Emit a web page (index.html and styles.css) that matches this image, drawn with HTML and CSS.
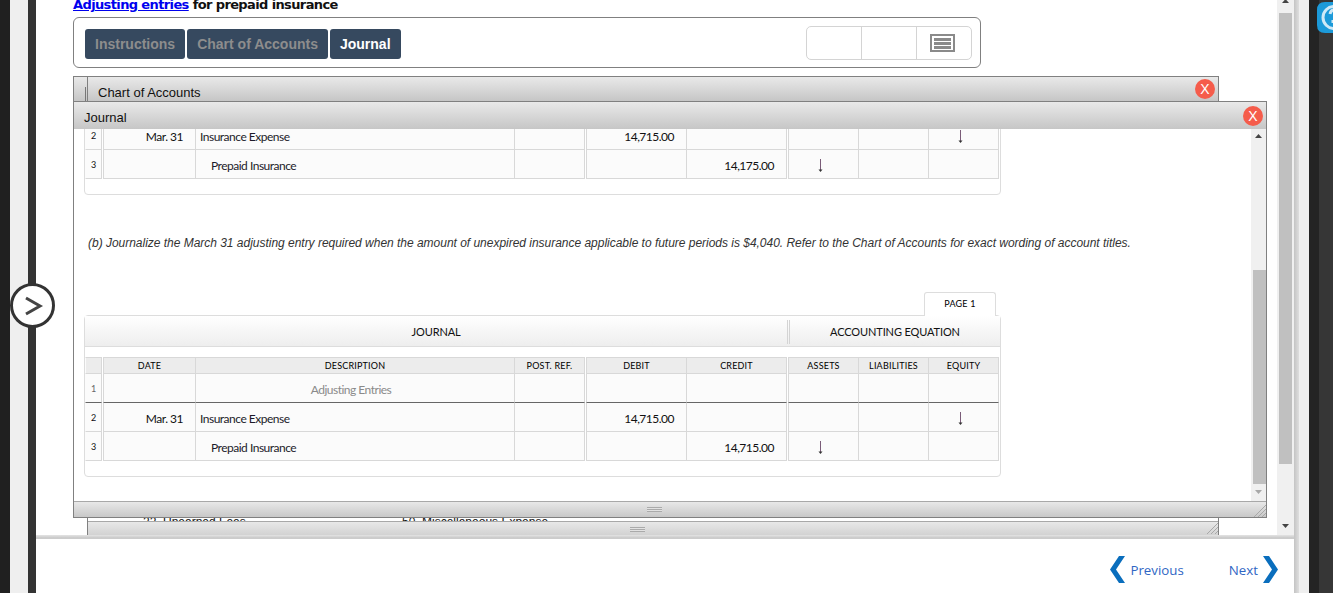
FILE: index.html
```html
<!DOCTYPE html>
<html lang="en">
<head>
<meta charset="utf-8">
<title>Adjusting entries for prepaid insurance</title>
<link rel="stylesheet" href="styles.css">
</head>
<body>
<div class="rail rail-a"></div>
<div class="rail rail-b"></div>
<div class="rail rail-c"></div>
<main class="main">
  <div class="viewport">
    <div class="stage">
      <h1 class="heading"><a href="#">Adjusting entries</a> for prepaid insurance</h1>
      <div class="toolbar">
        <button class="tab-btn">Instructions</button>
        <button class="tab-btn">Chart of Accounts</button>
        <button class="tab-btn active">Journal</button>
        <div class="tools">
          <span class="tool"></span>
          <span class="tool"></span>
          <span class="tool"><span class="list-icon"><i></i><i></i><i></i></span></span>
        </div>
      </div>

      <section class="win win-back">
        <div class="titlebar"><span class="mark"></span></div>
      </section>

      <section class="win win-chart">
        <div class="titlebar"><span class="title">Chart of Accounts</span><span class="close">X</span></div>
        <div class="chart-body">
          <span class="acct acct-a">22. Unearned Fees</span>
          <span class="acct acct-b">50. Miscellaneous Expense</span>
        </div>
        <div class="statusbar chart-status">
          <span class="grip"></span>
          <svg class="corner" width="11" height="11" viewBox="0 0 11 11"><path d="M0 11L11 0M4 11L11 4M8 11L11 8" stroke="#a8a8a8" fill="none"/></svg>
        </div>
      </section>

      <section class="win win-journal">
        <div class="titlebar"><span class="title">Journal</span><span class="close">X</span></div>
        <div class="journal-body">
          <div class="scroll-content">
            <div class="card">
              <div class="card-head"><div class="head-main">JOURNAL</div><div class="head-eq">ACCOUNTING EQUATION</div></div>
              <table class="ledger">
                <colgroup><col class="c-num"><col class="c-gap"><col class="c-date"><col class="c-desc"><col class="c-post"><col class="c-gap"><col class="c-debit"><col class="c-credit"><col class="c-gap"><col class="c-assets"><col class="c-liab"><col class="c-equity"></colgroup>
                <tr class="hdr"><th class="num"></th><td class="gap"></td><th class="start">DATE</th><th>DESCRIPTION</th><th>POST. REF.</th><td class="gap"></td><th class="start">DEBIT</th><th>CREDIT</th><td class="gap"></td><th class="start">ASSETS</th><th>LIABILITIES</th><th>EQUITY</th></tr>
                <tr class="row-first"><td class="num dim">1</td><td class="gap"></td><td class="start"></td><td class="note">Adjusting Entries</td><td></td><td class="gap"></td><td class="start"></td><td></td><td class="gap"></td><td class="start"></td><td></td><td></td></tr>
                <tr><td class="num">2</td><td class="gap"></td><td class="start date">Mar. 31</td><td class="acct-cell">Insurance Expense</td><td></td><td class="gap"></td><td class="start amount">14,715.00</td><td></td><td class="gap"></td><td class="start"></td><td></td><td class="arrow"><svg width="7" height="13" viewBox="0 0 7 13"><path d="M3.5 0V12" stroke="#7a5c78"/><path d="M1.5 10.5L3.5 13L5.500 10.5Z" fill="#333"/></svg></td></tr>
                <tr><td class="num">3</td><td class="gap"></td><td class="start"></td><td class="acct-cell indent">Prepaid Insurance</td><td></td><td class="gap"></td><td class="start"></td><td class="amount">14,175.00</td><td class="gap"></td><td class="start arrow"><svg width="7" height="13" viewBox="0 0 7 13"><path d="M3.5 0V12" stroke="#7a5c78"/><path d="M1.5 10.5L3.5 13L5.500 10.5Z" fill="#333"/></svg></td><td></td><td></td></tr>
              </table>
            </div>
            <p class="prompt">(b) Journalize the March 31 adjusting entry required when the amount of unexpired insurance applicable to future periods is $4,040. Refer to the Chart of Accounts for exact wording of account titles.</p>
            <div class="page-tab">PAGE 1</div>
            <div class="card">
              <div class="card-head"><div class="head-main">JOURNAL</div><div class="head-eq">ACCOUNTING EQUATION</div></div>
              <table class="ledger">
                <colgroup><col class="c-num"><col class="c-gap"><col class="c-date"><col class="c-desc"><col class="c-post"><col class="c-gap"><col class="c-debit"><col class="c-credit"><col class="c-gap"><col class="c-assets"><col class="c-liab"><col class="c-equity"></colgroup>
                <tr class="hdr"><th class="num"></th><td class="gap"></td><th class="start">DATE</th><th>DESCRIPTION</th><th>POST. REF.</th><td class="gap"></td><th class="start">DEBIT</th><th>CREDIT</th><td class="gap"></td><th class="start">ASSETS</th><th>LIABILITIES</th><th>EQUITY</th></tr>
                <tr class="row-first"><td class="num dim">1</td><td class="gap"></td><td class="start"></td><td class="note">Adjusting Entries</td><td></td><td class="gap"></td><td class="start"></td><td></td><td class="gap"></td><td class="start"></td><td></td><td></td></tr>
                <tr><td class="num">2</td><td class="gap"></td><td class="start date">Mar. 31</td><td class="acct-cell">Insurance Expense</td><td></td><td class="gap"></td><td class="start amount">14,715.00</td><td></td><td class="gap"></td><td class="start"></td><td></td><td class="arrow"><svg width="7" height="13" viewBox="0 0 7 13"><path d="M3.5 0V12" stroke="#7a5c78"/><path d="M1.5 10.5L3.5 13L5.500 10.5Z" fill="#333"/></svg></td></tr>
                <tr><td class="num">3</td><td class="gap"></td><td class="start"></td><td class="acct-cell indent">Prepaid Insurance</td><td></td><td class="gap"></td><td class="start"></td><td class="amount">14,715.00</td><td class="gap"></td><td class="start arrow"><svg width="7" height="13" viewBox="0 0 7 13"><path d="M3.5 0V12" stroke="#7a5c78"/><path d="M1.5 10.5L3.5 13L5.500 10.5Z" fill="#333"/></svg></td><td></td><td></td></tr>
              </table>
            </div>
          </div>
          <div class="inner-bar">
            <svg class="sb-up" width="7" height="4" viewBox="0 0 7 4"><path d="M0 4L3.500 0L7 4Z" fill="#444"/></svg>
            <div class="inner-thumb"></div>
            <svg class="sb-down" width="7" height="4" viewBox="0 0 7 4"><path d="M0 0L3.500 4L7 0Z" fill="#a8a8a8"/></svg>
          </div>
        </div>
        <div class="statusbar journal-status">
          <span class="grip"></span>
          <svg class="corner" width="12" height="12" viewBox="0 0 12 12"><path d="M0 12L12 0M4 12L12 4M8 12L12 8" stroke="#a8a8a8" fill="none"/></svg>
        </div>
      </section>
    </div>
    <div class="outer-bar">
      <svg class="outer-up" width="7" height="4" viewBox="0 0 7 4"><path d="M0 4L3.500 0L7 4Z" fill="#444"/></svg>
      <div class="outer-thumb"></div>
      <svg class="outer-down" width="7" height="4" viewBox="0 0 7 4"><path d="M0 0L3.500 4L7 0Z" fill="#444"/></svg>
    </div>
  </div>
  <footer class="footer">
    <a class="nav prev" href="#"><svg width="15" height="27" viewBox="0 0 15 27"><path d="M9 0H15L6 13.500L15 27H9L0 13.500Z" fill="#0a6ebd"/></svg><span>Previous</span></a>
    <a class="nav next" href="#"><span>Next</span><svg width="15" height="27" viewBox="0 0 15 27"><path d="M0 0H6L15 13.500L6 27H0L9 13.500Z" fill="#0a6ebd"/></svg></a>
  </footer>
</main>
<div class="rail rail-shadow"></div>
<div class="rail rail-d"></div>
<div class="rail rail-e"></div>
<div class="rail rail-f"></div>
<button class="side-toggle" aria-label="Expand"><svg width="24" height="22" viewBox="0 0 24 22"><path d="M5 3L19 11L5 19" fill="none" stroke="#444" stroke-width="3"/></svg></button>
<div class="help"><svg width="16" height="31" viewBox="0 0 16 31"><path d="M16 0H8Q0 0 0 8V23Q0 31 8 31H16Z" fill="#1c9ad9"/><circle cx="17" cy="15.500" r="11" fill="none" stroke="#cfe9f6" stroke-width="3"/><path d="M13 12Q14 8 17 8" fill="none" stroke="#cfe9f6" stroke-width="3"/><path d="M16 18V21" stroke="#cfe9f6" stroke-width="3"/></svg></div>
</body>
</html>
```

FILE: styles.css
```css
* { box-sizing: border-box; }
html, body { margin: 0; height: 593px; overflow: hidden; }
body { display: flex; background: #333; font-family: "Liberation Sans", Arial, sans-serif; color: #111; }

.rail { flex: none; height: 593px; }
.rail-a { width: 10px; background: #202020; }
.rail-b { width: 18px; background: #efefef; }
.rail-c { width: 8px; background: #333; }
.rail-shadow { width: 5px; background: linear-gradient(90deg, #c4c4c4, #dedede); }
.rail-d { width: 10px; background: #efefef; }
.rail-e { width: 10px; background: #242424; }
.rail-f { flex: 1; background: #363636; }

.main { flex: none; width: 1258px; height: 593px; display: flex; flex-direction: column; background: #fff; }
.viewport { flex: none; height: 535px; display: flex; }
.stage { flex: 1; position: relative; overflow: hidden; background: #fff; }

.heading { margin: -3px 0 0 37px; height: 20px; font: bold 13px/16px "DejaVu Sans", Verdana, sans-serif; color: #111; white-space: nowrap; letter-spacing: -.62px; }
.heading a { color: #0000ee; }

.toolbar { margin-left: 37px; width: 908px; height: 51px; display: flex; align-items: flex-start; gap: 2px; padding: 11px 8px 0 11px; border: 1px solid #808080; border-radius: 6px; background: #fff; }
.tab-btn { height: 30px; padding: 0 10px; border: 0; border-radius: 3px; background: #36495f; color: #8d8d8d; font: bold 14px "Liberation Sans", Arial, sans-serif; }
.tab-btn.active { color: #fff; }
.tools { margin: -3px 0 0 auto; width: 166px; height: 34px; display: flex; border: 1px solid #d4d4d4; border-radius: 5px; }
.tool { flex: 1; display: flex; align-items: center; justify-content: center; border-right: 1px solid #d4d4d4; }
.tool:last-child { border-right: 0; }
.list-icon { width: 25px; height: 18px; margin-right: 3px; display: flex; flex-direction: column; justify-content: center; gap: 1px; padding: 0 2px; border: 2px solid #8a8a8a; }
.list-icon i { flex: none; height: 3px; background: #8a8a8a; }

.win { position: absolute; display: flex; flex-direction: column; border: 1px solid #808080; background: #fff; }
.win-back { left: 37px; top: 76px; width: 30px; height: 40px; }
.win-chart { left: 51px; top: 76px; width: 1132px; height: 466px; }
.win-journal { left: 37px; top: 101px; width: 1194px; height: 417px; }

.titlebar { flex: none; display: flex; justify-content: space-between; align-items: center; padding: 0 3px 0 10px; background: linear-gradient(#e9e9e9, #c6c6c6); font-size: 13px; }
.win-back .titlebar { height: 24px; padding: 0; align-items: flex-end; }
.mark { width: 1px; height: 14px; margin-left: 11px; background: #777; }
.win-chart .titlebar { height: 24px; }
.win-journal .titlebar { height: 27px; }
.win-chart .title { padding-top: 7px; }
.win-journal .title { padding-top: 3px; }
.close { width: 20px; height: 20px; display: flex; align-items: center; justify-content: center; border-radius: 50%; background: #f55c4b; color: #fff; font-size: 14px; }

.chart-body { flex: 1; position: relative; overflow: hidden; font-size: 12px; }
.acct { position: absolute; bottom: 0; line-height: 16px; margin-bottom: -9px; }
.acct-a { left: 55px; }
.acct-b { left: 314px; }
.statusbar { flex: none; position: relative; background: linear-gradient(#e8e8e8, #c8c8c8); border-top: 1px solid #a8a8a8; }
.chart-status { height: 20px; }
.journal-status { height: 16px; }
.grip { position: absolute; height: 5px; width: 15px; background: repeating-linear-gradient(#aaa 0 1px, #e2e2e2 1px 2px); }
.chart-status .grip { left: 542px; top: 5px; }
.journal-status .grip { left: 573px; top: 5px; }
.corner { position: absolute; right: 0; bottom: 0; }
.chart-status .corner { bottom: 7px; }

.journal-body { flex: 1; min-height: 0; display: flex; overflow: hidden; }
.scroll-content { flex: 1; min-width: 0; height: 372px; padding-left: 10px; margin-top: -96px; display: flex; flex-direction: column; align-items: flex-start; }
.inner-bar { flex: none; width: 15px; display: flex; flex-direction: column; align-items: center; background: #f0f0f0; }
.sb-up { margin-top: 5px; }
.inner-thumb { width: 13px; height: 214px; margin: 132px 0 0 2px; background: #c0c0c0; }
.sb-down { margin-top: 6px; }

.card { flex: none; width: 917px; height: 162px; border: 1px solid #ddd; border-radius: 4px; background: #fff; }
.card-head { height: 31px; display: flex; align-items: center; padding-top: 1px; border-bottom: 1px solid #ddd; background: linear-gradient(#fff, #eeeeee); font: 11px/14px Lato, sans-serif; letter-spacing: -.12px; }
.head-main { width: 702px; text-align: center; }
.head-eq { flex: 1; height: 24px; line-height: 24px; text-align: center; border-left: 3px double #d4d4d4; }

.ledger { table-layout: fixed; width: 914px; margin-top: 10px; border-collapse: separate; border-spacing: 0; font-family: Lato, sans-serif; }
.c-num { width: 17px; } .c-gap { width: 1px; } .c-date { width: 93px; } .c-desc { width: 319px; }
.c-post { width: 70px; } .c-debit { width: 101px; } .c-credit { width: 100px; } .c-assets { width: 71px; }
.c-liab, .c-equity { width: 70px; }
.ledger th, .ledger td { padding: 2px 0 0; background: #fbfbfb; border-right: 1px solid #d8d8d8; border-bottom: 1px solid #d8d8d8; height: 29px; font-size: 12px; font-weight: 400; letter-spacing: -.5px; }
.ledger td.gap { border: 0; background: #fff; }
.ledger .start { border-left: 1px solid #d8d8d8; }
.ledger .hdr th { padding: 0; height: 17px; background: #ececec; border-top: 1px solid #d8d8d8; font: 400 9px Lato, sans-serif; letter-spacing: .2px; color: #000; }
.ledger .hdr td.gap { height: 17px; }
.ledger .num { padding: 0; font: 9px Lato, sans-serif; letter-spacing: 0; text-align: center; border-left: 1px solid #fbfbfb; }
.ledger .dim { color: #666; }
.ledger .row-first td { border-bottom-color: #666; }
.ledger .row-first td.gap { border-bottom: 0; }
.ledger .note { text-align: center; color: #8a8a8a; padding-right: 8px; }
.ledger .date { text-align: right; padding-right: 12px; }
.ledger .acct-cell { padding-left: 4px; color: #1b1b2a; }
.ledger .indent { padding-left: 15px; }
.ledger .amount { text-align: right; padding-right: 12px; }
.ledger .arrow { text-align: center; padding: 3px 7px 0 0; line-height: 0; }

.prompt { flex: none; margin: 0 0 0 4px; height: 97px; padding-top: 40px; font: italic 12px/16px "Liberation Sans", Arial, sans-serif; letter-spacing: -.02px; color: #333; white-space: nowrap; }
.page-tab { flex: none; width: 72px; height: 24px; margin: 0 0 -1px 840px; position: relative; z-index: 1; border: 1px solid #ddd; border-bottom: 0; border-radius: 3px 3px 0 0; background: #fff; font: 400 9px/22px Lato, sans-serif; letter-spacing: .2px; text-align: center; color: #000; }

.outer-bar { flex: none; width: 17px; display: flex; flex-direction: column; align-items: center; background: #f0f0f0; }
.outer-up { margin-top: -1px; margin-bottom: 10px; }
.outer-thumb { width: 13px; height: 451px; background: #c0c0c0; }
.outer-down { margin-top: 60px; }

.footer { flex: 1; display: flex; justify-content: flex-end; align-items: center; gap: 45px; padding: 11px 16px 0 0; background: linear-gradient(#e4e4e4 0, #c8c8c8 3px, #d0d0d0 4px, #fff 4px); }
.nav { display: flex; align-items: center; gap: 5px; color: #2f66c4; text-decoration: none; font: 13.300px "Open Sans", sans-serif; }

.side-toggle { position: absolute; left: 10px; top: 283px; width: 45px; height: 45px; padding: 0; display: flex; align-items: center; justify-content: center; border: 3px solid #333; border-radius: 50%; background: #fff; }
.help { position: absolute; left: 1317px; top: 2px; line-height: 0; }
```
